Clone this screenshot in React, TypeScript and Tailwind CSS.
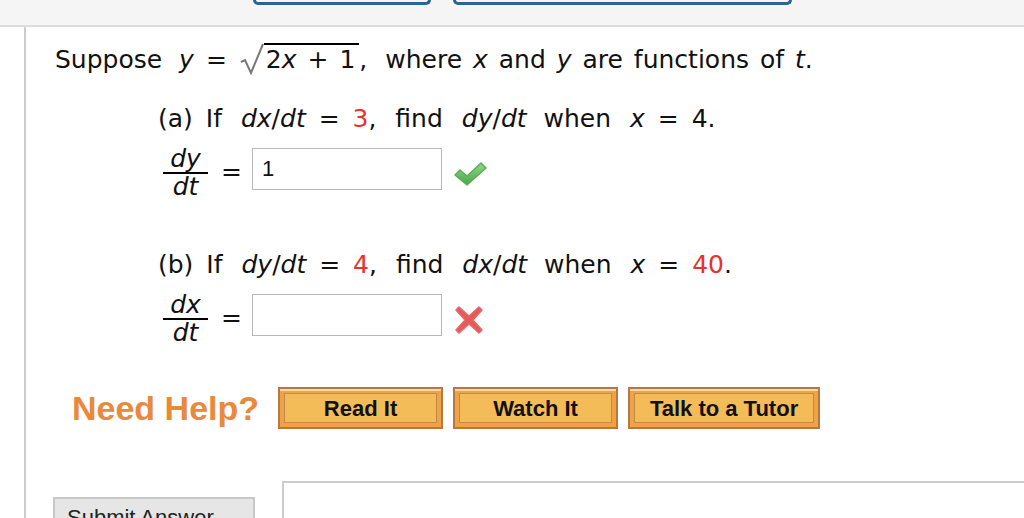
import React from "react";

const V = { fontFamily: '"DejaVu Sans", Verdana, sans-serif' };
const A = { fontFamily: '"Liberation Sans", Arial, sans-serif' };

function Radical({ children }: { children: React.ReactNode }) {
  return (
    <span className="inline-flex -translate-y-[2px] items-start align-top">
      <svg width="25" height="32" viewBox="0 0 25 32">
        <path d="M2 19 L6 17 L12 30 L24 1" fill="none" stroke="#777" strokeWidth="2" />
      </svg>
      <span className="border-t-[2px] border-black pl-[2px] pr-[4px] leading-[30px]">{children}</span>
    </span>
  );
}

function Frac({ top, bottom }: { top: string; bottom: string }) {
  return (
    <div className="flex w-[45px] flex-col items-center italic leading-[26px]">
      <span>{top}</span>
      <div className="h-[2px] w-full bg-black" />
      <span>{bottom}</span>
    </div>
  );
}

function Check() {
  return (
    <svg width="34" height="25" viewBox="0 0 34 25">
      <defs>
        <linearGradient id="g" x1="0" y1="0" x2="0" y2="1">
          <stop offset="0" stopColor="#90d98b" />
          <stop offset="1" stopColor="#4aa646" />
        </linearGradient>
      </defs>
      <path d="M1 13 L6 8 L13 14 L27 1 L32 6 L13 23 Z" fill="url(#g)" stroke="#5aae55" strokeWidth="1.5" strokeLinejoin="round" />
    </svg>
  );
}

function Cross() {
  return (
    <svg width="30" height="30" viewBox="0 0 30 30">
      <path d="M5 2 L15 11 L25 2 L28 5 L19 15 L28 25 L25 28 L15 19 L5 28 L2 25 L11 15 L2 5 Z" fill="#e8595a" stroke="#e46a6a" strokeWidth="1.5" strokeLinejoin="round" />
    </svg>
  );
}

function HelpButton({ label, width }: { label: string; width: string }) {
  return (
    <div className={`${width} h-[42px] border-[2px] border-[#b57a3c] bg-[#f0a24a] p-[4px] shadow-[inset_0_2px_0_#f9d9a3]`}>
      <div
        className="flex h-full items-center justify-center border border-[#c08a45] bg-[#f4bb59] text-[22px] font-bold text-[#111]"
        style={A}
      >
        {label}
      </div>
    </div>
  );
}

export default function App() {
  return (
    <div className="h-[518px] w-[1024px] overflow-hidden bg-white text-[25px] text-[#111]" style={V}>
      {/* top bar */}
      <div className="flex h-[27px] gap-[22px] border-b-[2px] border-[#dddddd] bg-[#f5f5f5] pl-[253px]">
        <div className="h-[5px] w-[178px] rounded-b-[6px] border-x-[3px] border-b-[3px] border-[#2b6597]" />
        <div className="h-[5px] w-[339px] rounded-b-[6px] border-x-[3px] border-b-[3px] border-[#2b6597]" />
      </div>

      <div className="ml-[24px] h-full border-l-[2px] border-[#cccccc] pl-[29px] pt-[18px]">
        {/* question */}
        <div className="h-[30px] leading-[30px] whitespace-nowrap [word-spacing:3px]">
          Suppose <span className="ml-[6px] italic">y</span>
          <span className="ml-[12px]">=</span>
          <span className="ml-[12px]">
            <Radical>
              2<span className="italic">x</span> + 1
            </Radical>
          </span>
          ,<span className="ml-[18px]">where</span> <span className="italic">x</span> and{" "}
          <span className="italic">y</span> are functions of <span className="italic">t</span>.
        </div>

        {/* part a */}
        <div className="ml-[103px] mt-[29px] h-[30px] leading-[30px] whitespace-nowrap [word-spacing:5px]">
          (a) If <span className="ml-[6px] italic">dx</span>/<span className="italic">dt</span> ={" "}
          <span className="text-[#e5332a]">3</span>, <span className="ml-[6px]">find</span>{" "}
          <span className="ml-[6px] italic">dy</span>/<span className="italic">dt</span>{" "}
          <span className="ml-[4px]">when</span> <span className="ml-[6px] italic">x</span> = 4.
        </div>
        <div className="ml-[108px] mt-[12px] flex items-start">
          <Frac top="dy" bottom="dt" />
          <span className="ml-[13px] mt-[11px] leading-[30px]">=</span>
          <input
            readOnly
            value="1"
            className="ml-[10px] mt-[2px] h-[42px] w-[190px] border border-[#b8b8b8] px-[9px] text-[22px] text-[#111] outline-none"
            style={A}
          />
          <span className="ml-[12px] mt-[16px]">
            <Check />
          </span>
        </div>

        {/* part b */}
        <div className="ml-[103px] mt-[50px] h-[30px] leading-[30px] whitespace-nowrap [word-spacing:5px]">
          (b) If <span className="ml-[6px] italic">dy</span>/<span className="italic">dt</span> ={" "}
          <span className="text-[#e5332a]">4</span>, <span className="ml-[6px]">find</span>{" "}
          <span className="ml-[6px] italic">dx</span>/<span className="italic">dt</span>{" "}
          <span className="ml-[4px]">when</span> <span className="ml-[6px] italic">x</span> ={" "}
          <span className="text-[#e5332a]">40</span>.
        </div>
        <div className="ml-[108px] mt-[12px] flex items-start">
          <Frac top="dx" bottom="dt" />
          <span className="ml-[13px] mt-[11px] leading-[30px]">=</span>
          <input
            readOnly
            value=""
            className="ml-[10px] mt-[2px] h-[42px] w-[190px] border border-[#b8b8b8] px-[9px] text-[22px] outline-none"
            style={A}
          />
          <span className="ml-[12px] mt-[13px]">
            <Cross />
          </span>
        </div>

        {/* need help */}
        <div className="ml-[17px] mt-[41px] flex items-center">
          <span className="text-[34px] leading-[42px] font-bold text-[#e8893b]" style={A}>
            Need Help?
          </span>
          <div className="ml-[19px] flex gap-[10px]">
            <HelpButton label="Read It" width="w-[165px]" />
            <HelpButton label="Watch It" width="w-[165px]" />
            <HelpButton label="Talk to a Tutor" width="w-[192px]" />
          </div>
        </div>

        {/* submit */}
        <div className="mt-[52px] flex items-start">
          <div
            className="ml-[-2px] mt-[16px] h-[40px] w-[202px] border-[2px] border-[#c8c8c8] bg-[#e6e6e6] pl-[12px] pt-[5px] text-[22px] leading-[28px] text-[#222]"
            style={A}
          >
            Submit Answer
          </div>
          <div className="ml-[27px] h-[60px] flex-1 border-l-[2px] border-t-[2px] border-[#cccccc]" />
        </div>
      </div>
    </div>
  );
}
